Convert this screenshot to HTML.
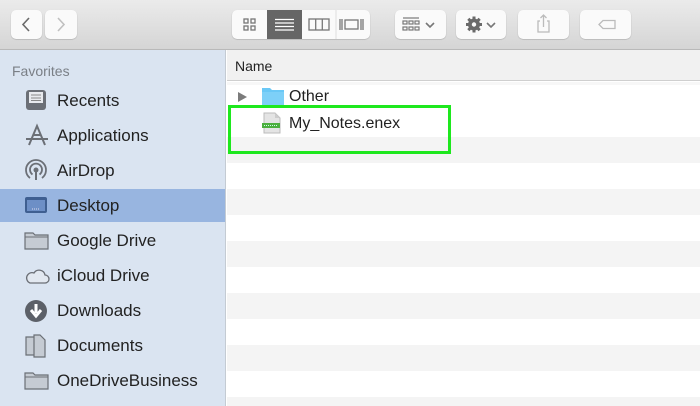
<!DOCTYPE html>
<html style="width:700px;height:406px;overflow:hidden"><head><meta charset="utf-8"><style>
*{margin:0;padding:0;box-sizing:border-box}
body{width:700px;height:406px;overflow:hidden;font-family:"Liberation Sans",sans-serif;position:relative;background:#fff}
.tb{position:absolute;left:0;top:0;width:700px;height:50px;background:linear-gradient(#ebebeb,#d5d5d5);border-bottom:1px solid #b9b9b9}
.btn{position:absolute;top:10px;height:29px;background:#fafafa;border-radius:5px;box-shadow:0 0.5px 1px rgba(0,0,0,.25)}
.side{position:absolute;left:0;top:50px;width:226px;height:356px;background:#dae4f1;border-right:1px solid #c4cbd3}
.it{position:absolute;left:57px;font-size:17px;color:#222}
.ic{position:absolute;left:24px}
.hdr{position:absolute;left:227px;top:50px;width:473px;height:31px;background:#f1f1f1;border-bottom:1px solid #cfcfcf;font-size:14px;color:#222;padding:8px 0 0 8px}
.row{position:absolute;left:227px;width:473px;height:26px}
.g{background:#f4f4f4}
</style></head><body>
<div class="tb">
 <div class="btn" style="left:11px;width:31px"><svg width="31" height="29"><path d="M18 8 L12 14.5 L18 21" fill="none" stroke="#6a6a6a" stroke-width="1.6"/></svg></div>
 <div class="btn" style="left:45px;width:32px"><svg width="32" height="29"><path d="M13 8 L19 14.5 L13 21" fill="none" stroke="#c0c0c0" stroke-width="1.6"/></svg></div>
 <div class="btn" style="left:232px;width:138px;overflow:hidden">
  <svg width="138" height="29">
   <g fill="none" stroke="#777" stroke-width="1.3"><rect x="12" y="9" width="4" height="4"/><rect x="19" y="9" width="4" height="4"/><rect x="12" y="16" width="4" height="4"/><rect x="19" y="16" width="4" height="4"/></g>
   <rect x="35" y="0" width="35" height="29" fill="#666"/>
   <g stroke="#fff" stroke-width="1.3"><path d="M43 9.5H62M43 13H62M43 16.5H62M43 20H62"/></g>
   <g fill="none" stroke="#777" stroke-width="1.3"><rect x="77" y="9" width="20" height="11"/><path d="M83.7 9V20M90.3 9V20"/><path d="M108 9V20M110 9V20M129 9V20M131 9V20"/><rect x="113" y="10" width="13" height="9"/></g>
   <path d="M104 0V29" stroke="#ddd"/>
  </svg></div>
 <div class="btn" style="left:395px;width:51px"><svg width="51" height="29"><g fill="none" stroke="#777" stroke-width="1.2"><path d="M8 8H24"/><rect x="8" y="11" width="4" height="3"/><rect x="14" y="11" width="4" height="3"/><rect x="20" y="11" width="4" height="3"/><rect x="8" y="17" width="4" height="3"/><rect x="14" y="17" width="4" height="3"/><rect x="20" y="17" width="4" height="3"/><path d="M31 13L35 17L39 13" stroke-width="1.6"/></g></svg></div>
 <div class="btn" style="left:456px;width:50px"><svg width="50" height="29"><g transform="translate(18 14.5)"><circle r="6" fill="#6a6a6a"/><g stroke="#6a6a6a" stroke-width="3"><path d="M0 -8V8M-8 0H8M-5.7 -5.7L5.7 5.7M-5.7 5.7L5.7 -5.7"/></g><circle r="2.2" fill="#fafafa"/></g><path d="M31 13L35 17L39 13" fill="none" stroke="#777" stroke-width="1.6"/></svg></div>
 <div class="btn" style="left:518px;width:51px"><svg width="51" height="29"><g fill="none" stroke="#bbb" stroke-width="1.3"><path d="M22 11H20V22H31V11H29"/><path d="M25.5 17V5M22.5 8L25.5 5L28.5 8"/></g></svg></div>
 <div class="btn" style="left:580px;width:51px"><svg width="51" height="29"><path d="M19 14.5L23 10.5H35V18.5H23Z" fill="none" stroke="#bbb" stroke-width="1.3"/></svg></div>
</div>
<div class="side">
 <div style="position:absolute;left:12px;top:13px;font-size:14px;color:#7a7f86">Favorites</div>
 <div style="position:absolute;left:0;top:139px;width:225px;height:33px;background:#98b5e0"></div>
</div>
<svg class="ic" style="top:88px" width="24" height="24"><rect x="2" y="2" width="20" height="20" rx="3" fill="#6b6f76"/><rect x="5" y="4" width="14" height="11" fill="#e8eaee"/><path d="M7 7H17M7 10H17M7 12.5H17" stroke="#888"/></svg>
<svg class="ic" style="top:123px" width="26" height="24"><g stroke="#6b6f76" stroke-width="2" fill="none"><path d="M5 22L13 3L21 22M2 16H24M9 12H17"/></g></svg>
<svg class="ic" style="top:158px" width="24" height="24"><g fill="none" stroke="#6b6f76" stroke-width="1.8"><path d="M6 20A10 10 0 1 1 18 20"/><path d="M8.5 16.5A6 6 0 1 1 15.5 16.5"/></g><circle cx="12" cy="12" r="2.5" fill="#6b6f76"/><path d="M12 14V22" stroke="#6b6f76" stroke-width="2"/></svg>
<svg class="ic" style="top:194px" width="24" height="22"><rect x="1" y="3" width="22" height="16" rx="2" fill="#3f5f91" /><rect x="3" y="6" width="18" height="11" fill="#6d8fc6"/><path d="M8 15H16" stroke="#dde" stroke-dasharray="1 1"/></svg>
<svg class="ic" style="top:229px" width="25" height="22"><path d="M1 4H9L11 6H24V20H1Z" fill="#c5cbd3" stroke="#6b6f76" stroke-width="1.2"/><path d="M1 8H24" stroke="#6b6f76"/></svg>
<svg class="ic" style="top:265px" width="26" height="22"><path d="M6 18H21A4 4 0 0 0 21 10A6 6 0 0 0 10 8A5 5 0 0 0 6 18Z" fill="#e2e8f0" stroke="#6b6f76" stroke-width="1.3"/></svg>
<svg class="ic" style="top:299px" width="24" height="24"><circle cx="12" cy="12" r="11" fill="#5c6068"/><path d="M12 5V14M7 11L12 17L17 11" stroke="#fff" stroke-width="3" fill="none"/></svg>
<svg class="ic" style="top:333px" width="24" height="26"><g fill="#c5cbd3" stroke="#6b6f76" stroke-width="1.2"><path d="M2 4H10L13 7V22H2Z"/><path d="M10 2H16L21 7V24H10Z"/></g></svg>
<svg class="ic" style="top:369px" width="25" height="22"><path d="M1 4H9L11 6H24V20H1Z" fill="#c5cbd3" stroke="#6b6f76" stroke-width="1.2"/><path d="M1 8H24" stroke="#6b6f76"/></svg>
<div class="it" style="top:91px">Recents</div>
<div class="it" style="top:126px">Applications</div>
<div class="it" style="top:161px">AirDrop</div>
<div class="it" style="top:196px">Desktop</div>
<div class="it" style="top:231px">Google Drive</div>
<div class="it" style="top:266px">iCloud Drive</div>
<div class="it" style="top:301px">Downloads</div>
<div class="it" style="top:336px">Documents</div>
<div class="it" style="top:371px">OneDriveBusiness</div>
<div class="hdr">Name</div>
<div class="row" style="top:82px;height:3px;background:#f7f7f7"></div>
<div class="row g" style="top:137px"></div>
<div class="row g" style="top:189px"></div>
<div class="row g" style="top:241px"></div>
<div class="row g" style="top:293px"></div>
<div class="row g" style="top:345px"></div>
<div class="row g" style="top:397px;height:9px"></div>
<svg style="position:absolute;left:236px;top:90px" width="14" height="14"><path d="M2 2L11 7L2 12Z" fill="#7b7b7b"/></svg>
<svg style="position:absolute;left:261px;top:87px" width="24" height="19"><path d="M1 1H9L11 3H23V18H1Z" fill="#6ac8f6"/><path d="M1 5H23V18H1Z" fill="#7dd0f8"/></svg>
<div style="position:absolute;left:289px;top:88px;font-size:16px;color:#222">Other</div>
<svg style="position:absolute;left:261px;top:112px" width="22" height="22"><path d="M3 1H14L19 6V21H3Z" fill="#e4e4e4" stroke="#bbb"/><path d="M14 1V6H19" fill="#ccc"/><rect x="1" y="11" width="18" height="5" fill="#4caf3e"/><path d="M3 13.5H17" stroke="#cfe" stroke-dasharray="1 1"/></svg>
<div style="position:absolute;left:289px;top:115px;font-size:16px;color:#222">My_Notes.enex</div>
<div style="position:absolute;left:228px;top:105px;width:223px;height:49px;border:3px solid #1ee81e"></div>
</body></html>
